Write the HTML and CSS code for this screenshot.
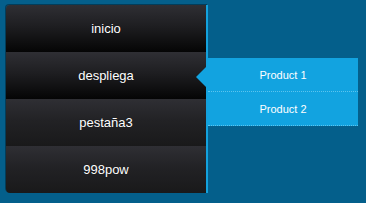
FILE: index.html
```html
<!DOCTYPE html>
<html>
<head>
<meta charset="utf-8">
<link rel="stylesheet" href="styles.css">
</head>
<body>
<nav class="menu">
  <ul class="menu-list">
    <li class="item"><a class="link">inicio</a></li>
    <li class="item item-open"><a class="link">despliega</a>
      <ul class="submenu">
        <li class="sub-item">Product 1</li>
        <li class="sub-item">Product 2</li>
      </ul>
    </li>
    <li class="item item-light"><a class="link">pestaña3</a></li>
    <li class="item item-light item-last"><a class="link">998pow</a></li>
  </ul>
</nav>
</body>
</html>
```
FILE: styles.css
```css
html, body {
  margin: 0;
  padding: 0;
  background: #045f8b;
  width: 366px;
  height: 203px;
  overflow: hidden;
  font-family: "Liberation Sans", Arial, sans-serif;
}
.menu {
  padding: 5px 0 0 6px;
}
.menu-list {
  list-style: none;
  margin: 0;
  padding: 0;
  width: 200px;
  border-right: 2px solid #13a2de;
  border-radius: 4px 0 0 4px;
  box-shadow: -1px -1px 0 rgba(0,0,0,0.35);
}
.item {
  position: relative;
  height: 47px;
  display: flex;
  align-items: center;
  justify-content: center;
  background: linear-gradient(#2f2f34 0%, #1e1e21 45%, #050505 100%);
}
.item:first-child {
  border-radius: 4px 0 0 0;
}
.item-light {
  background: linear-gradient(#2f2f34 0%, #222225 45%, #19191a 100%);
}
.item-last {
  border-radius: 0 0 0 4px;
}
.link {
  color: #ffffff;
  font-size: 13px;
  text-shadow: 0 0 1px rgba(0,0,0,0.4);
}
.submenu {
  position: absolute;
  left: 202px;
  top: 6px;
  width: 150px;
  margin: 0;
  padding: 0;
  list-style: none;
  background: #12a3e0;
}
.submenu::before {
  content: "";
  position: absolute;
  left: -12px;
  top: 7px;
  border-right: 12px solid #12a3e0;
  border-top: 12px solid transparent;
  border-bottom: 12px solid transparent;
}
.sub-item {
  height: 33px;
  display: flex;
  align-items: center;
  justify-content: center;
  color: #ffffff;
  font-size: 11px;
  border-bottom: 1px dotted #5cc4ee;
}
```
